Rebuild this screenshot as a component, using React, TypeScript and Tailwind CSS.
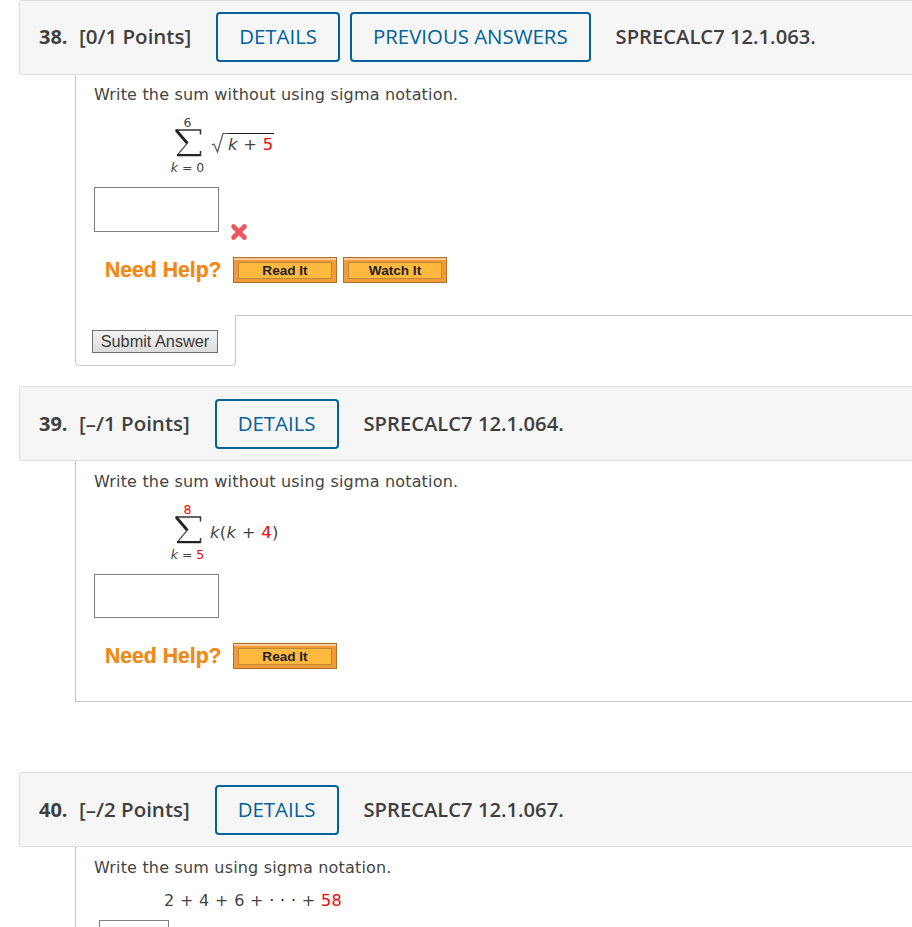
import React from "react";

const sans = "font-['Open_Sans',sans-serif]";
const verdana = "font-['DejaVu_Sans',sans-serif]";

function OutlineButton({ label }: { label: string }) {
  return (
    <span className="flex h-[50px] items-center rounded-[4px] border-2 border-[#00629b] px-[21px] text-[20.4px] font-medium text-[#00629b]">
      {label}
    </span>
  );
}

function Header({ num, points, buttons, code, first }: { num: string; points: string; buttons: string[]; code: string; first?: boolean }) {
  return (
    <div className={`${sans} flex h-[75px] w-[960px] items-center rounded-[3px] border border-[#dddddd] bg-[#f6f6f6] pl-[19px] text-[#3f3f3f] ${first ? "pb-[2px]" : ""}`}>
      <span className="w-[40px] text-[20px] font-bold">{num}</span>
      <span className="text-[20.5px] font-semibold">{points}</span>
      <div className="ml-[25px] flex gap-[10px]">
        {buttons.map((b) => (
          <OutlineButton key={b} label={b} />
        ))}
      </div>
      <span className="ml-[25px] text-[20.2px] font-semibold">{code}</span>
    </div>
  );
}

function Sigma({ top, bottom, topRed }: { top: string; bottom: React.ReactNode; topRed?: boolean }) {
  return (
    <div className={`${verdana} flex w-[37px] flex-col items-center pt-[1px] text-[12.5px] leading-[13px] text-[#444]`}>
      <span className={topRed ? "text-[#ff0000]" : ""}>{top}</span>
      <svg width="28" height="30" viewBox="0 0 28 30" className="mt-[-1px]">
        <path d="M1.5 2H26.5V6.5" fill="none" stroke="#333" strokeWidth="1.5" />
        <path d="M2 2L13.5 15.5" fill="none" stroke="#222" strokeWidth="2.8" />
        <path d="M13.5 15L3 27.5" fill="none" stroke="#555" strokeWidth="1.2" />
        <path d="M3 27.5H26.5V23" fill="none" stroke="#333" strokeWidth="1.5" />
        <path d="M3 27H26" stroke="#222" strokeWidth="2" />
      </svg>
      <span className="mt-[3px] whitespace-nowrap">{bottom}</span>
    </div>
  );
}

function HelpButton({ label }: { label: string }) {
  return (
    <span className="flex h-[26px] w-[104px] items-stretch border border-[#b0712a] bg-[#f29a36] px-[4px] pb-[3px] pt-[4px] shadow-[inset_0_2px_0_#f9c79a]">
      <span className="flex flex-1 items-center justify-center border border-[#c08a3a] bg-[#ffb93f] pt-[2px] font-['Liberation_Sans',sans-serif] text-[13.6px] font-bold text-[#222]">
        {label}
      </span>
    </span>
  );
}

function Help({ buttons }: { buttons: string[] }) {
  return (
    <div className="ml-[11px] flex items-center">
      <span className="w-[128px] font-['Liberation_Sans',sans-serif] text-[21.2px] font-bold text-[#ee8a1a] [text-shadow:0_0_1px_#f5b570]">Need Help?</span>
      <div className="flex gap-[6px]">
        {buttons.map((b) => (
          <HelpButton key={b} label={b} />
        ))}
      </div>
    </div>
  );
}

const prompt = `${verdana} text-[16px] leading-[20px] tracking-[0.18px] text-[#444]`;

export default function App() {
  return (
    <div className="h-[927px] w-[912px] overflow-hidden bg-white pl-[19px]">
      <Header first num="38." points="[0/1 Points]" buttons={["DETAILS", "PREVIOUS ANSWERS"]} code="SPRECALC7 12.1.063." />
      <div className="ml-[56px] w-[900px] rounded-bl-[4px] border-l border-[#c8c8c8]">
        <div className="h-[240px] pl-[18px] pt-[10px]">
          <p className={prompt}>Write the sum without using sigma notation.</p>
          <div className="ml-[75px] mt-[10px] flex h-[59px] items-start">
            <Sigma top="6" bottom={<><i>k</i> = 0</>} />
            <div className={`${verdana} ml-[5px] mt-[18px] flex items-start text-[16.4px] tracking-[0.3px] text-[#444]`}>
              <svg width="17" height="21" viewBox="0 0 17 21">
                <path d="M1 12L3 11L6.5 19L12 0.5H17" fill="none" stroke="#555" strokeWidth="1.2" />
              </svg>
              <span className="border-t border-[#222] italic leading-[21px]">
                k + <span className="not-italic text-[#ff0000]">5</span>
              </span>
            </div>
          </div>
          <div className="relative mt-[13px]">
            <div className="h-[45px] w-[125px] border border-[#808080] bg-white" />
            <svg width="18" height="18" viewBox="0 0 18 18" className="absolute left-[136px] top-[36px]">
              <path d="M3.5 3.5L14.5 14.5M14.5 3.5L3.5 14.5" stroke="#f25560" strokeWidth="4.6" strokeLinecap="round" />
            </svg>
          </div>
          <div className="mt-[22px]">
            <Help buttons={["Read It", "Watch It"]} />
          </div>
        </div>
        <div className="flex h-[51px]">
          <div className="flex w-[160px] items-start rounded-b-[4px] border-r border-b border-[#c8c8c8] pl-[16px] pt-[15px]">
            <span className="flex h-[23px] w-[126px] items-center justify-center border border-[#6f6f6f] bg-gradient-to-b from-[#f2f2f2] to-[#dcdcdc] font-['Liberation_Sans',sans-serif] text-[16.3px] text-[#3a3a3a]">
              Submit Answer
            </span>
          </div>
          <div className="flex-1 border-t border-[#c8c8c8]" />
        </div>
      </div>

      <div className="h-[20px]" />
      <Header num="39." points="[–/1 Points]" buttons={["DETAILS"]} code="SPRECALC7 12.1.064." />
      <div className="ml-[56px] h-[241px] w-[900px] border-b border-l border-[#c8c8c8] pl-[18px] pt-[11px]">
        <p className={prompt}>Write the sum without using sigma notation.</p>
        <div className="ml-[75px] mt-[10px] flex h-[59px] items-start">
          <Sigma top="8" topRed bottom={<><i>k</i> = <span className="text-[#ff0000]">5</span></>} />
          <span className={`${verdana} ml-[4px] mt-[21px] text-[16.4px] leading-[20px] tracking-[0.3px] text-[#444]`}>
            <i>k</i>(<i>k</i> + <span className="text-[#ff0000]">4</span>)
          </span>
        </div>
        <div className="mt-[13px] h-[44px] w-[125px] border border-[#808080] bg-white" />
        <div className="mt-[22px]">
          <Help buttons={["Read It"]} />
        </div>
      </div>

      <div className="h-[70px]" />
      <Header num="40." points="[–/2 Points]" buttons={["DETAILS"]} code="SPRECALC7 12.1.067." />
      <div className="ml-[56px] h-[100px] w-[900px] border-l border-[#c8c8c8] pl-[18px] pt-[11px]">
        <p className={prompt}>Write the sum using sigma notation.</p>
        <p className={`${verdana} ml-[70px] mt-[13px] text-[16px] leading-[20px] tracking-[0.33px] text-[#444]`}>
          2 + 4 + 6 + <span className="text-[#222]">· · ·</span> + <span className="text-[#ff0000]">58</span>
        </p>
        <div className="ml-[5px] mt-[9px] h-[45px] w-[70px] border border-[#808080] bg-white" />
      </div>
    </div>
  );
}
